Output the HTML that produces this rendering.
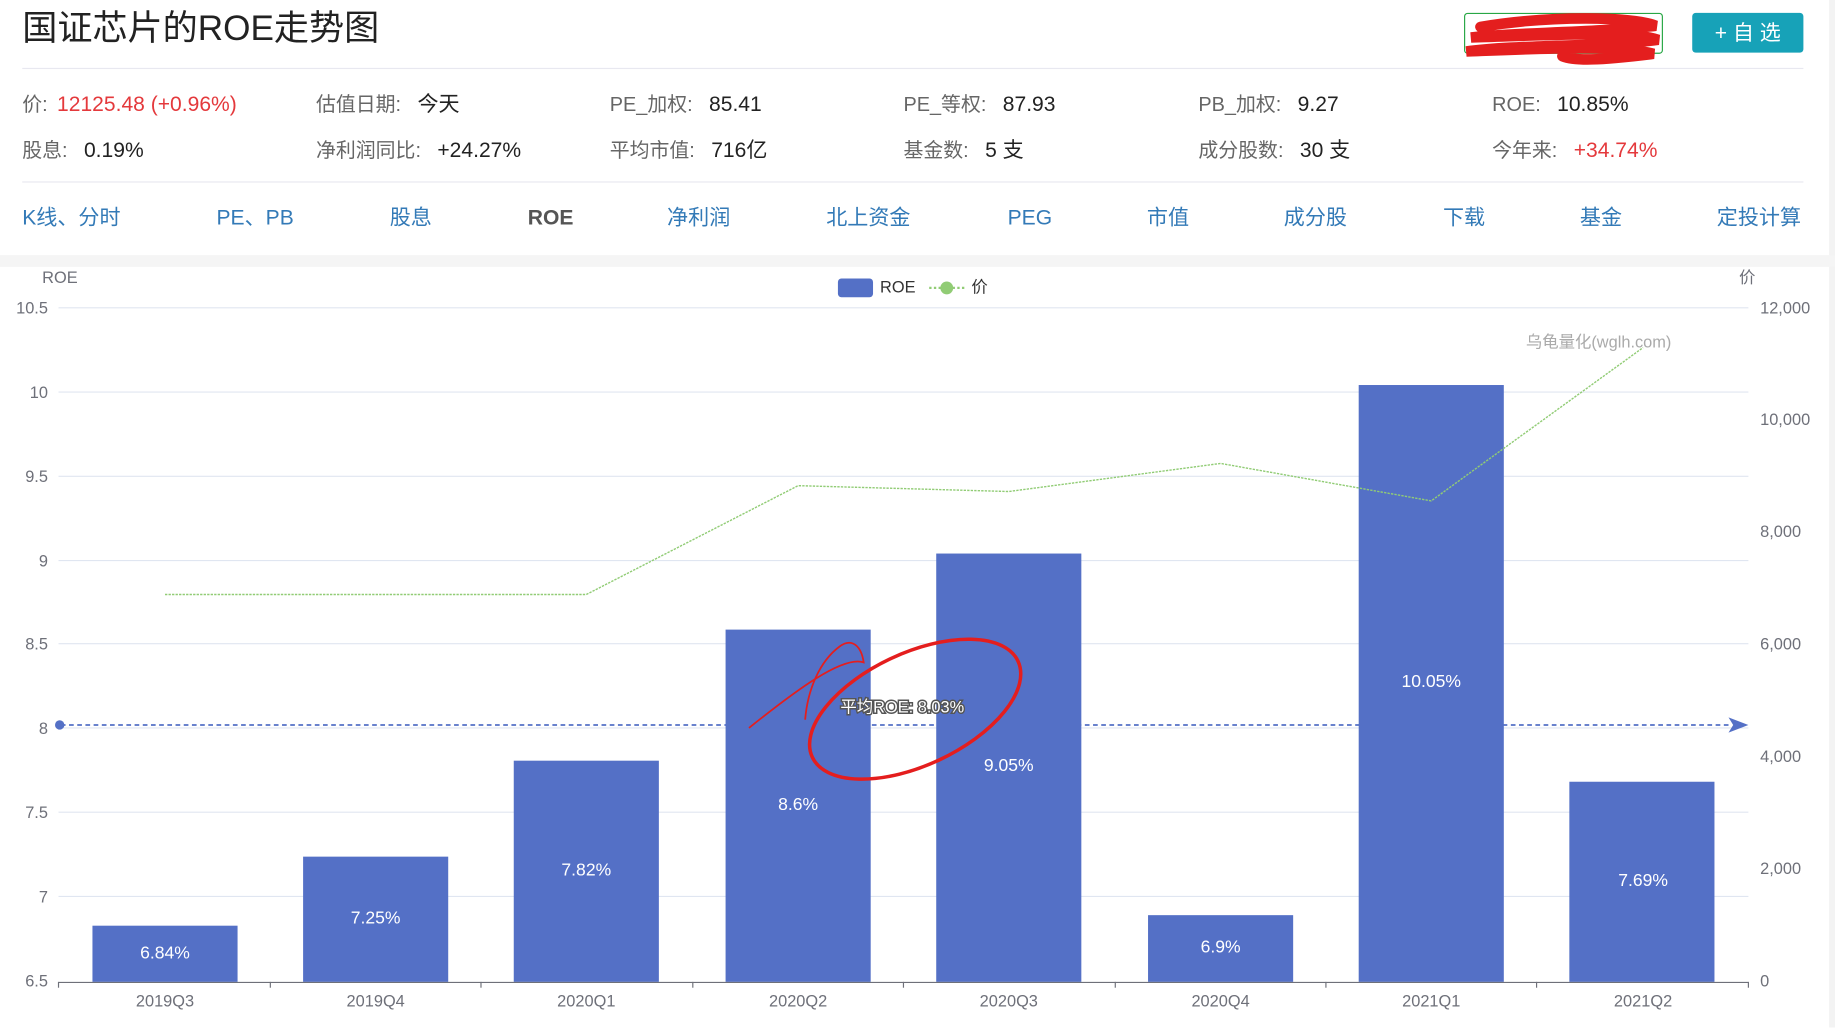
<!DOCTYPE html>
<html><head><meta charset="utf-8"><style>
html,body{margin:0;padding:0;width:1835px;height:1027px;overflow:hidden;background:#fff}
#w{position:absolute;left:0;top:0;width:1568px;height:878px;transform:scale(1.17028);transform-origin:0 0;font-family:"Liberation Sans","Noto Sans CJK SC",sans-serif}
.a{position:absolute;white-space:nowrap}
.row{position:absolute;white-space:nowrap;height:22px;line-height:22px}
.l{color:#666;font-size:17px}
.v{color:#222;font-size:18px;margin-left:14px}
.r{color:#e4393c}
.t{position:absolute;top:174px;height:24px;line-height:24px;color:#337ab7;font-size:18px;white-space:nowrap}
</style></head><body><div id="w">
<div class="a" style="left:19px;top:7px;height:36px;line-height:36px;font-size:30px;color:#222">国证芯片的ROE走势图</div>
<div class="a" style="left:1251px;top:11px;width:168px;height:33px;border:1px solid #28a745;border-radius:3px"></div>
<svg class="a" style="left:1245px;top:8px" width="185" height="50"><path d="M20 15 C80 5 150 6 170 14 C120 20 40 20 12 24 C80 22 150 18 172 26 C130 32 50 30 8 36 C60 34 140 30 168 38 C120 44 100 44 90 40" stroke="#e41e1e" stroke-width="9" fill="none" stroke-linecap="round"/></svg>
<div class="a" style="left:1446px;top:11px;width:95px;height:34px;background:#17a2b8;border-radius:3px;color:#fff;font-size:18px;line-height:34px;text-align:center">+ 自 选</div>
<div class="a" style="left:1563px;top:0;width:5px;height:878px;background:#f3f3f3"></div>
<div class="a" style="left:19px;top:58px;width:1522px;height:1px;background:#e8e8f0"></div>
<div class="row" style="left:19px;top:78px"><span class="l">价:</span><span class="v r" style="margin-left:8px">12125.48 (+0.96%)</span></div>
<div class="row" style="left:270px;top:78px"><span class="l">估值日期:</span><span class="v">今天</span></div>
<div class="row" style="left:521px;top:78px"><span class="l">PE_加权:</span><span class="v">85.41</span></div>
<div class="row" style="left:772px;top:78px"><span class="l">PE_等权:</span><span class="v">87.93</span></div>
<div class="row" style="left:1024px;top:78px"><span class="l">PB_加权:</span><span class="v">9.27</span></div>
<div class="row" style="left:1275px;top:78px"><span class="l">ROE:</span><span class="v">10.85%</span></div>
<div class="row" style="left:19px;top:117px"><span class="l">股息:</span><span class="v">0.19%</span></div>
<div class="row" style="left:270px;top:117px"><span class="l">净利润同比:</span><span class="v">+24.27%</span></div>
<div class="row" style="left:521px;top:117px"><span class="l">平均市值:</span><span class="v">716亿</span></div>
<div class="row" style="left:772px;top:117px"><span class="l">基金数:</span><span class="v">5 支</span></div>
<div class="row" style="left:1024px;top:117px"><span class="l">成分股数:</span><span class="v">30 支</span></div>
<div class="row" style="left:1275px;top:117px"><span class="l">今年来:</span><span class="v r">+34.74%</span></div>
<div class="a" style="left:19px;top:155px;width:1522px;height:1px;background:#e8e8f0"></div>
<div class="t" style="left:19px">K线、分时</div>
<div class="t" style="left:185px">PE、PB</div>
<div class="t" style="left:333px">股息</div>
<div class="t" style="left:451px;color:#555;font-weight:bold">ROE</div>
<div class="t" style="left:570px">净利润</div>
<div class="t" style="left:706px">北上资金</div>
<div class="t" style="left:861px">PEG</div>
<div class="t" style="left:980px">市值</div>
<div class="t" style="left:1097px">成分股</div>
<div class="t" style="left:1233px">下载</div>
<div class="t" style="left:1350px">基金</div>
<div class="t" style="left:1467px">定投计算</div>
<div class="a" style="left:0;top:218px;width:1568px;height:10px;background:#f5f5f5"></div>
<svg class="a" style="left:0;top:0" width="1563" height="878" font-family="Liberation Sans,Noto Sans CJK SC,sans-serif">
<g stroke="#e0e6f1" stroke-width="1">
<line x1="50" x2="1494" y1="263" y2="263"/><line x1="50" x2="1494" y1="335" y2="335"/><line x1="50" x2="1494" y1="407" y2="407"/><line x1="50" x2="1494" y1="479" y2="479"/><line x1="50" x2="1494" y1="550" y2="550"/><line x1="50" x2="1494" y1="622" y2="622"/><line x1="50" x2="1494" y1="694" y2="694"/><line x1="50" x2="1494" y1="766" y2="766"/>
</g>
<g font-size="14" fill="#6e7079" text-anchor="end">
<text x="41" y="268">10.5</text><text x="41" y="340">10</text><text x="41" y="412">9.5</text><text x="41" y="484">9</text><text x="41" y="555">8.5</text><text x="41" y="627">8</text><text x="41" y="699">7.5</text><text x="41" y="771">7</text><text x="41" y="843">6.5</text>
</g>
<g font-size="14" fill="#6e7079">
<text x="1504" y="268">12,000</text><text x="1504" y="363">10,000</text><text x="1504" y="459">8,000</text><text x="1504" y="555">6,000</text><text x="1504" y="651">4,000</text><text x="1504" y="747">2,000</text><text x="1504" y="843">0</text>
<text x="36" y="242">ROE</text><text x="1486" y="242">价</text>
</g>
<g fill="#5470c6">
<rect x="79" y="791" width="124" height="48"/><rect x="259" y="732" width="124" height="107"/><rect x="439" y="650" width="124" height="189"/><rect x="620" y="538" width="124" height="301"/><rect x="800" y="473" width="124" height="366"/><rect x="981" y="782" width="124" height="57"/><rect x="1161" y="329" width="124" height="510"/><rect x="1341" y="668" width="124" height="171"/>
</g>
<line x1="50" x2="1494" y1="839.5" y2="839.5" stroke="#6e7079"/>
<g stroke="#6e7079"><line x1="50" x2="50" y1="839" y2="844"/><line x1="231" x2="231" y1="839" y2="844"/><line x1="411" x2="411" y1="839" y2="844"/><line x1="592" x2="592" y1="839" y2="844"/><line x1="772" x2="772" y1="839" y2="844"/><line x1="953" x2="953" y1="839" y2="844"/><line x1="1133" x2="1133" y1="839" y2="844"/><line x1="1313" x2="1313" y1="839" y2="844"/><line x1="1494" x2="1494" y1="839" y2="844"/></g>
<g font-size="14" fill="#6e7079" text-anchor="middle">
<text x="141" y="860">2019Q3</text><text x="321" y="860">2019Q4</text><text x="501" y="860">2020Q1</text><text x="682" y="860">2020Q2</text><text x="862" y="860">2020Q3</text><text x="1043" y="860">2020Q4</text><text x="1223" y="860">2021Q1</text><text x="1404" y="860">2021Q2</text>
</g>
<g font-size="15" fill="#fff" text-anchor="middle">
<text x="141" y="819">6.84%</text><text x="321" y="789">7.25%</text><text x="501" y="748">7.82%</text><text x="682" y="692">8.6%</text><text x="862" y="659">9.05%</text><text x="1043" y="814">6.9%</text><text x="1223" y="587">10.05%</text><text x="1404" y="757">7.69%</text>
</g>
<polyline points="141,508 321,508 501,508 682,415 862,420 1043,396 1223,428 1404,297" fill="none" stroke="#91cc75" stroke-width="1.2" stroke-dasharray="2,1"/>
<line x1="52" x2="1480" y1="619.5" y2="619.5" stroke="#5470c6" stroke-width="1.5" stroke-dasharray="4,3"/>
<circle cx="51" cy="619.5" r="4" fill="#5470c6"/>
<path d="M1477 613 L1494 619.5 L1477 626 L1481 619.5Z" fill="#5470c6"/>
<text x="771" y="609" font-size="14" fill="#fff" stroke="#555" stroke-width="2.5" paint-order="stroke" text-anchor="middle">平均ROE: 8.03%</text>
<text x="1366" y="297" font-size="14" fill="#aaa" text-anchor="middle">乌龟量化(wglh.com)</text>
<rect x="716" y="238" width="30" height="16" rx="3" fill="#5470c6"/>
<text x="752" y="250" font-size="14" fill="#333">ROE</text>
<line x1="794" x2="824" y1="246" y2="246" stroke="#91cc75" stroke-width="2" stroke-dasharray="2,2"/>
<circle cx="809" cy="246" r="5.5" fill="#91cc75"/>
<text x="830" y="250" font-size="14" fill="#333">价</text>
<ellipse cx="782" cy="606" rx="97" ry="48" transform="rotate(-25 782 606)" fill="none" stroke="#e41e1e" stroke-width="3"/>
<path d="M640 622 C680 590 720 560 738 566 C736 552 728 545 718 552 C700 565 690 590 688 615" fill="none" stroke="#e41e1e" stroke-width="1.5"/>
</svg>
</div></body></html>
